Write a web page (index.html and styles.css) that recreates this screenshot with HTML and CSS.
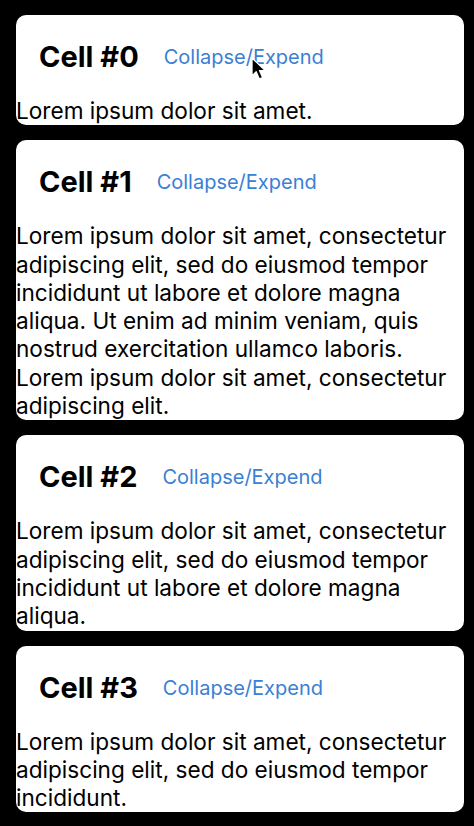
FILE: index.html
```html
<!DOCTYPE html>
<html>
<head>
<meta charset="utf-8">
<link rel="stylesheet" href="styles.css">
</head>
<body>
<div class="list">
  <div class="cell">
    <div class="head">
      <span class="title">Cell #0</span>
      <span class="link">Collapse/Expend</span>
    </div>
    <p class="body">Lorem ipsum dolor sit amet.</p>
  </div>
  <div class="cell">
    <div class="head">
      <span class="title">Cell #1</span>
      <span class="link">Collapse/Expend</span>
    </div>
    <p class="body">Lorem ipsum dolor sit amet, consectetur adipiscing elit, sed do eiusmod tempor incididunt ut labore et dolore magna aliqua. Ut enim ad minim veniam, quis nostrud exercitation ullamco laboris. Lorem ipsum dolor sit amet, consectetur adipiscing elit.</p>
  </div>
  <div class="cell">
    <div class="head">
      <span class="title">Cell #2</span>
      <span class="link">Collapse/Expend</span>
    </div>
    <p class="body">Lorem ipsum dolor sit amet, consectetur adipiscing elit, sed do eiusmod tempor incididunt ut labore et dolore magna aliqua.</p>
  </div>
  <div class="cell">
    <div class="head">
      <span class="title">Cell #3</span>
      <span class="link">Collapse/Expend</span>
    </div>
    <p class="body">Lorem ipsum dolor sit amet, consectetur adipiscing elit, sed do eiusmod tempor incididunt.</p>
  </div>
</div>
<svg class="cursor" width="17" height="25" viewBox="0 0 17 25">
  <path d="M1 1 L1 19 L5.2 14.8 L8.3 22 L11.6 20.5 L8.5 13.6 L14.2 13.6 Z" fill="#000" stroke="#fff" stroke-width="1.3" stroke-linejoin="round"/>
</svg>
</body>
</html>
```
FILE: styles.css
```css
html, body {
  margin: 0;
  padding: 0;
  background: #000;
}
body {
  font-family: Inter, "Noto Sans", sans-serif;
  position: relative;
  height: 826px;
  overflow: hidden;
}
.list {
  display: flex;
  flex-direction: column;
  gap: 15px;
  padding: 15px 10px 0 16px;
}
.cell {
  background: #fff;
  border-radius: 10px;
  overflow: hidden;
}
.head {
  display: flex;
  align-items: center;
  gap: 25px;
  padding: 25px 0 0 23px;
  height: 34px;
}
.title {
  font-size: 29px;
  font-weight: 700;
  line-height: 34px;
  color: #000;
}
.link {
  font-size: 20px;
  color: #3a80d4;
  line-height: 34px;
}
.body {
  margin: 23px 0 0 0;
  font-size: 22.6px;
  line-height: 28.3px;
  color: #000;
}
.cursor {
  position: absolute;
  left: 251px;
  top: 57px;
}
```
